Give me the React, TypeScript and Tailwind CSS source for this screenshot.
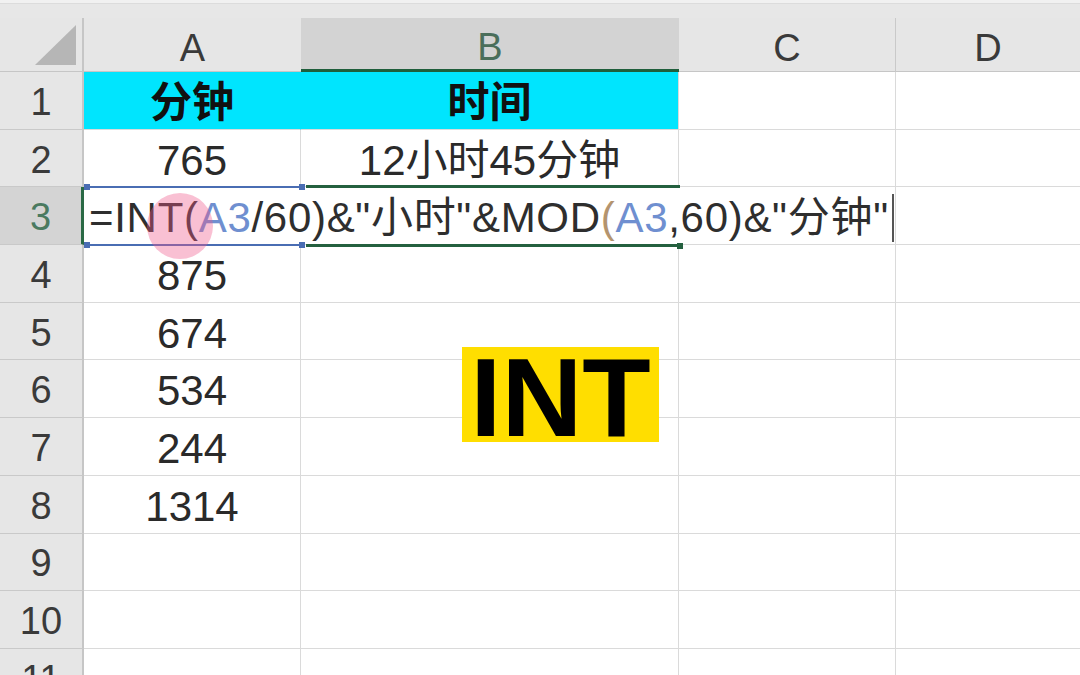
import React from "react";

const font = "font-['Liberation_Sans','Noto_Sans_CJK_SC',sans-serif]";

function RowHead({ n, active }: { n: number; active?: boolean }) {
  return (
    <div
      className={
        "w-[84px] shrink-0 flex items-center justify-center pt-[4px] text-[38px] border-b border-[#c9c9c9] " +
        (active
          ? "bg-[#d4d4d4] text-[#4a7a60] border-r-[3px] border-r-[#2a6a45]"
          : "bg-[#e6e6e6] text-[#3a3a3a] border-r-2 border-r-[#c6c6c6]")
      }
    >
      {n}
    </div>
  );
}

function Cell({ w, children, cls = "" }: { w: string; children?: React.ReactNode; cls?: string }) {
  return (
    <div
      className={
        w +
        " shrink-0 flex items-center justify-center pt-[4px] border-r border-b border-[#dadada] text-[42px] text-[#2a2a2a] " +
        cls
      }
    >
      {children}
    </div>
  );
}

function DataRow({ n, a, b }: { n: number; a?: string; b?: string }) {
  return (
    <div className="flex h-[57.7px] shrink-0">
      <RowHead n={n} />
      <Cell w="w-[217px]">{a}</Cell>
      <Cell w="w-[378px]">{b}</Cell>
      <Cell w="w-[217px]" />
      <Cell w="flex-1" cls="border-r-0" />
    </div>
  );
}

export default function App() {
  const blue = "text-[#6f8fd0]";
  return (
    <div className={"w-[1080px] h-[675px] overflow-hidden bg-white relative flex flex-col " + font}>
      {/* top strip */}
      <div className="h-[18px] shrink-0 bg-[#e7e7e7] flex flex-col">
        <div className="h-[4px] bg-[#f1f1f1] border-b border-[#dcdcdc]" />
      </div>

      {/* column headers */}
      <div className="flex h-[54px] shrink-0 bg-[#e6e6e6] text-[38px] text-[#3a3a3a]">
        <div className="w-[84px] shrink-0 flex items-end justify-end pr-[6px] pb-[6px] border-r-2 border-[#c6c6c6] border-b border-b-[#c6c6c6]">
          <svg width="41" height="40" viewBox="0 0 41 40">
            <polygon points="41,0 41,40 0,40" fill="#b6b6b6" />
          </svg>
        </div>
        <div className="w-[217px] shrink-0 flex items-center justify-center pt-[8px] border-b border-[#c6c6c6]">A</div>
        <div className="w-[378px] shrink-0 flex items-center justify-center pt-[8px] bg-[#d3d3d3] text-[#4a6e5a] border-b-[3px] border-[#1f5e3c]">
          B
        </div>
        <div className="w-[217px] shrink-0 flex items-center justify-center pt-[8px] border-r border-[#c9c9c9] border-b border-b-[#c6c6c6]">
          C
        </div>
        <div className="flex-1 flex items-center justify-center pt-[8px] border-b border-[#c6c6c6]">D</div>
      </div>

      {/* rows */}
      <div className="flex flex-col relative">
        {/* row 1 */}
        <div className="flex h-[57.7px] shrink-0">
          <RowHead n={1} />
          <Cell w="w-[217px]" cls="bg-[#00e5fe] font-bold text-[#111] border-r-[#00e5fe]">
            分钟
          </Cell>
          <Cell w="w-[378px]" cls="bg-[#00e5fe] font-bold text-[#111]">
            时间
          </Cell>
          <Cell w="w-[217px]" />
          <Cell w="flex-1" cls="border-r-0" />
        </div>
        <DataRow n={2} a="765" b="12小时45分钟" />

        {/* row 3 (editing) */}
        <div className="flex h-[57.7px] shrink-0">
          <RowHead n={3} active />
          <div className="w-[812px] shrink-0 flex items-center pl-[5px] pt-[4px] border-r border-b border-[#dadada] text-[42px] text-[#2e2e2e] tracking-[0.7px] whitespace-nowrap">
            <span>=INT(</span>
            <span className={blue}>A3</span>
            <span>/60)&amp;"小时"&amp;MOD</span>
            <span className="text-[#b4946e]">(</span>
            <span className={blue}>A3</span>
            <span>,60)&amp;"分钟"</span>
            <span className="inline-block w-[2px] h-[48px] bg-[#555] ml-[3px]" />
          </div>
          <Cell w="flex-1" cls="border-r-0" />
        </div>

        <DataRow n={4} a="875" />
        <DataRow n={5} a="674" />
        <DataRow n={6} a="534" />
        <DataRow n={7} a="244" />
        <DataRow n={8} a="1314" />
        <DataRow n={9} />
        <DataRow n={10} />
        <DataRow n={11} />

        {/* selection / reference overlays */}
        <div className="absolute left-[86px] top-[114px] w-[216px] h-[2px] bg-[#4a6db3]" />
        <div className="absolute left-[86px] top-[172px] w-[216px] h-[2px] bg-[#4a6db3]" />
        <div className="absolute left-[84px] top-[112px] w-[6px] h-[6px] bg-[#4a6db3]" />
        <div className="absolute left-[299px] top-[112px] w-[6px] h-[6px] bg-[#4a6db3]" />
        <div className="absolute left-[84px] top-[170px] w-[6px] h-[6px] bg-[#4a6db3]" />
        <div className="absolute left-[299px] top-[170px] w-[6px] h-[6px] bg-[#4a6db3]" />
        <div className="absolute left-[306px] top-[113px] w-[374px] h-[3px] bg-[#24603f]" />
        <div className="absolute left-[306px] top-[172px] w-[372px] h-[3px] bg-[#24603f]" />
        <div className="absolute left-[677px] top-[171px] w-[6px] h-[6px] bg-[#24603f]" />

        {/* touch indicator */}
        <div className="absolute left-[147px] top-[121px] w-[66px] h-[66px] rounded-full bg-[rgba(240,90,140,0.38)]" />

        {/* INT label */}
        <div className="absolute left-[462px] top-[275px] w-[197px] h-[95px] bg-[#ffde00] flex items-center justify-center">
          <span className="font-['Liberation_Sans',sans-serif] font-bold text-[112px] leading-none text-black pt-[6px]">
            INT
          </span>
        </div>
      </div>
    </div>
  );
}
